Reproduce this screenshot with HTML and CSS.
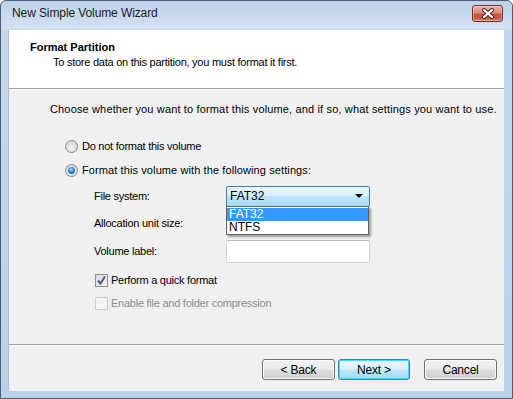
FILE: index.html
```html
<!DOCTYPE html>
<html>
<head>
<meta charset="utf-8">
<link rel="stylesheet" href="styles.css">
</head>
<body>
<div class="window">
  <div class="titlebar">
    <span class="title">New Simple Volume Wizard</span>
    <button class="close" aria-label="Close">
      <svg width="14" height="11" viewBox="0 0 14 11">
        <path d="M3 2 L11 9 M11 2 L3 9" stroke="#5a2a24" stroke-width="4" stroke-linecap="round"/>
        <path d="M3 2 L11 9 M11 2 L3 9" stroke="#ffffff" stroke-width="2" stroke-linecap="round"/>
      </svg>
    </button>
  </div>
  <div class="client">
    <div class="header">
      <div class="h-title">Format Partition</div>
      <div class="h-sub">To store data on this partition, you must format it first.</div>
    </div>
    <div class="body">
      <div class="intro">Choose whether you want to format this volume, and if so, what settings you want to use.</div>
      <div class="row radio-row r1"><span class="radio"></span>Do not format this volume</div>
      <div class="row radio-row r2"><span class="radio on"></span>Format this volume with the following settings:</div>
      <div class="row field f1">
        <span class="label">File system:</span>
        <div class="combo-wrap">
          <div class="combo"><span>FAT32</span><span class="arrow"></span></div>
          <div class="list">
            <div class="opt sel">FAT32</div>
            <div class="opt">NTFS</div>
          </div>
        </div>
      </div>
      <div class="row field f2"><span class="label">Allocation unit size:</span></div>
      <div class="row field f3">
        <span class="label">Volume label:</span>
        <div class="input"></div>
      </div>
      <div class="row check-row c1">
        <span class="check on">
          <svg width="11" height="11" viewBox="0 0 11 11"><path d="M2 5.5 L4.5 8.5 L9 1.5" fill="none" stroke="#4a5e8c" stroke-width="2"/></svg>
        </span>Perform a quick format</div>
      <div class="row check-row c2 disabled"><span class="check off"></span>Enable file and folder compression</div>
    </div>
    <div class="footer">
      <button class="btn">&lt; Back</button>
      <button class="btn default">Next &gt;</button>
      <button class="btn cancel">Cancel</button>
    </div>
  </div>
</div>
</body>
</html>
```
FILE: styles.css
```css
* { box-sizing: border-box; }
html, body { margin: 0; padding: 0; }
body {
  width: 513px;
  height: 399px;
  overflow: hidden;
  font-family: "Liberation Sans", Arial, sans-serif;
  font-size: 11px;
  letter-spacing: -0.25px;
  color: #000;
  background: #ffffff;
}
.window {
  width: 513px;
  height: 399px;
  border: 1px solid #4f5d6f;
  border-radius: 6px 6px 0 0;
  background: linear-gradient(to bottom, #bdd1ea 0px, #d3e1f1 28px, #c4d8ee 29px, #b9d1ea 399px);
  padding: 0 8px 7px 7px;
  display: flex;
  flex-direction: column;
}
.titlebar {
  height: 29px;
  display: flex;
  align-items: center;
  justify-content: space-between;
  padding-left: 4px;
}
.title {
  font-family: "Liberation Sans", Arial, sans-serif;
  font-size: 12px;
  letter-spacing: -0.1px;
  color: #1a1a1a;
  margin-top: -6px;
}
.close {
  width: 31px;
  height: 17px;
  margin-top: -5px;
  margin-right: 1px;
  padding: 0;
  border: 1px solid #6e3129;
  border-radius: 3px;
  background: linear-gradient(to bottom, #eab1a5 0%, #dd8d7c 45%, #c8533e 55%, #c35a44 80%, #d88a72 100%);
  box-shadow: inset 0 0 0 1px rgba(255,255,255,0.35);
  display: flex;
  align-items: center;
  justify-content: center;
}
.client {
  flex: 1;
  background: #f0f0f0;
  display: flex;
  flex-direction: column;
  border-left: 1px solid #a9bfd6;
}
.header {
  height: 59px;
  background: #ffffff;
  border-bottom: 1px solid #a0a0a0;
  padding: 10px 0 0 21px;
}
.h-title {
  font-weight: bold;
  line-height: 14px;
  letter-spacing: 0;
}
.h-sub {
  line-height: 14px;
  margin-top: 1px;
  padding-left: 23px;
}
.body {
  flex: 1;
  padding-top: 13px;
  box-shadow: inset 0 1px 0 #ffffff;
}
.intro {
  line-height: 14px;
  height: 14px;
  padding-left: 41px;
  letter-spacing: 0.15px;
}
.row {
  height: 22px;
  display: flex;
  align-items: center;
}
.radio-row { padding-left: 56px; }
.r1 { margin-top: 19px; }
.r2 { margin-top: 2px; letter-spacing: 0.1px; }
.radio {
  width: 13px;
  height: 13px;
  border-radius: 50%;
  border: 1px solid #8c8c8c;
  background: radial-gradient(circle at 50% 60%, #f4f4f4 0%, #dcdcdc 60%, #cfcfcf 100%);
  margin-right: 4px;
  position: relative;
  flex: none;
}
.radio.on::after {
  content: "";
  position: absolute;
  left: 2px;
  top: 2px;
  width: 7px;
  height: 7px;
  border-radius: 50%;
  background: radial-gradient(circle at 45% 35%, #9fe0fb 0%, #2f8bc6 45%, #134d7c 100%);
}
.field { padding-left: 85px; position: relative; }
.label { width: 132px; flex: none; }
.f1 { margin-top: 4px; }
.f2 { margin-top: 5px; }
.f3 { margin-top: 6px; }
.combo-wrap {
  position: relative;
  width: 144px;
  height: 21px;
}
.combo {
  width: 144px;
  height: 21px;
  border: 1px solid #3c7fb1;
  border-radius: 2px;
  background: linear-gradient(to bottom, #eaf6fd 0%, #d9f0fc 45%, #bee6fd 50%, #a7d9f5 100%);
  display: flex;
  align-items: center;
  justify-content: space-between;
  padding: 0 6px 0 3px;
  font-size: 12px;
  letter-spacing: 0;
}
.arrow {
  width: 0;
  height: 0;
  border-left: 4px solid transparent;
  border-right: 4px solid transparent;
  border-top: 4px solid #000;
}
.list {
  position: absolute;
  left: 0;
  top: 20px;
  width: 143px;
  height: 29px;
  background: #fff;
  border: 1px solid #646464;
  box-shadow: 2px 2px 2px rgba(0,0,0,0.35);
  padding: 1px 0;
  z-index: 5;
}
.opt {
  height: 13px;
  line-height: 13px;
  padding-left: 2px;
  font-size: 12px;
  letter-spacing: 0;
}
.opt.sel { background: #3399ff; color: #fff; }
.input {
  width: 144px;
  height: 23px;
  border: 1px solid #d5d5d5;
  border-top-color: #bdbdbd;
  background: #fff;
  border-radius: 2px;
}
.check-row { padding-left: 86px; }
.c1 { margin-top: 7px; }
.c2 { margin-top: 1px; }
.check {
  width: 13px;
  height: 13px;
  border: 1px solid #8e8f8f;
  background: linear-gradient(135deg, #dcdcdc 0%, #f5f5f5 100%);
  margin-right: 3px;
  flex: none;
  display: flex;
  align-items: center;
  justify-content: center;
}
.check.off {
  border-color: #cbcbcb;
  background: #f4f4f4;
}
.disabled { color: #8d8d8d; }
.footer {
  height: 47px;
  border-top: 1px solid #a0a0a0;
  box-shadow: inset 0 1px 0 #ffffff;
  display: flex;
  align-items: flex-start;
  padding: 14px 0 0 253px;
}
.btn {
  width: 73px;
  height: 21px;
  padding: 0;
  font-family: "Liberation Sans", Arial, sans-serif;
  font-size: 12px;
  letter-spacing: -0.2px;
  color: #000;
  border: 1px solid #707070;
  border-radius: 3px;
  background: linear-gradient(to bottom, #f2f2f2 0%, #ebebeb 48%, #dddddd 52%, #cfcfcf 100%);
  box-shadow: inset 0 0 0 1px #fcfcfc;
  margin-right: 3px;
}
.btn.default {
  width: 72px;
  border-color: #3c7fb1;
  background: linear-gradient(to bottom, #eaf6fd 0%, #d9f0fc 48%, #bee6fd 52%, #a7d9f5 100%);
  box-shadow: inset 0 0 0 1px #48d8fb;
}
.btn.cancel { margin-left: 11px; }
```
